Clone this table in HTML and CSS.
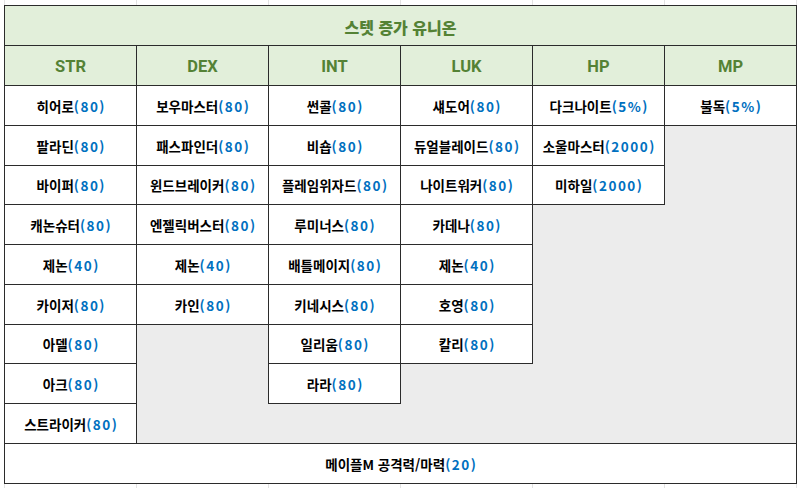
FILE: index.html
```html
<!DOCTYPE html>
<html lang="ko">
<head>
<meta charset="utf-8">
<title>스텟 증가 유니온</title>
<link rel="stylesheet" href="styles.css">
</head>
<body>
<div class="sheet">
  <div class="title">스텟 증가 유니온</div>
  <div class="head">STR</div>
  <div class="head">DEX</div>
  <div class="head">INT</div>
  <div class="head">LUK</div>
  <div class="head">HP</div>
  <div class="head">MP</div>

  <div class="col col-str">
    <div class="cell">히어로<span class="num">(80)</span></div>
    <div class="cell">팔라딘<span class="num">(80)</span></div>
    <div class="cell">바이퍼<span class="num">(80)</span></div>
    <div class="cell">캐논슈터<span class="num">(80)</span></div>
    <div class="cell">제논<span class="num">(40)</span></div>
    <div class="cell">카이저<span class="num">(80)</span></div>
    <div class="cell">아델<span class="num">(80)</span></div>
    <div class="cell">아크<span class="num">(80)</span></div>
    <div class="cell">스트라이커<span class="num">(80)</span></div>
  </div>
  <div class="col col-dex">
    <div class="cell">보우마스터<span class="num">(80)</span></div>
    <div class="cell">패스파인더<span class="num">(80)</span></div>
    <div class="cell">윈드브레이커<span class="num">(80)</span></div>
    <div class="cell">엔젤릭버스터<span class="num">(80)</span></div>
    <div class="cell">제논<span class="num">(40)</span></div>
    <div class="cell">카인<span class="num">(80)</span></div>
  </div>
  <div class="col col-int">
    <div class="cell">썬콜<span class="num">(80)</span></div>
    <div class="cell">비숍<span class="num">(80)</span></div>
    <div class="cell">플레임위자드<span class="num">(80)</span></div>
    <div class="cell">루미너스<span class="num">(80)</span></div>
    <div class="cell">배틀메이지<span class="num">(80)</span></div>
    <div class="cell">키네시스<span class="num">(80)</span></div>
    <div class="cell">일리움<span class="num">(80)</span></div>
    <div class="cell">라라<span class="num">(80)</span></div>
  </div>
  <div class="col col-luk">
    <div class="cell">섀도어<span class="num">(80)</span></div>
    <div class="cell">듀얼블레이드<span class="num">(80)</span></div>
    <div class="cell">나이트워커<span class="num">(80)</span></div>
    <div class="cell">카데나<span class="num">(80)</span></div>
    <div class="cell">제논<span class="num">(40)</span></div>
    <div class="cell">호영<span class="num">(80)</span></div>
    <div class="cell">칼리<span class="num">(80)</span></div>
  </div>
  <div class="col col-hp">
    <div class="cell">다크나이트<span class="num">(5%)</span></div>
    <div class="cell">소울마스터<span class="num">(2000)</span></div>
    <div class="cell">미하일<span class="num">(2000)</span></div>
  </div>
  <div class="col col-mp">
    <div class="cell">불독<span class="num">(5%)</span></div>
  </div>

  <div class="footer">메이플M 공격력/마력<span class="num">(20)</span></div>
</div>
</body>
</html>
```
FILE: styles.css
```css
html, body {
  margin: 0;
  padding: 0;
}

body {
  width: 800px;
  height: 488px;
  padding: 5px 0 0 4px;
  box-sizing: border-box;
  background-color: #ffffff;
  background-image: repeating-linear-gradient(
    to right,
    #e3e3e3 0, #e3e3e3 1px,
    transparent 1px, transparent 132px
  );
  background-position: 4px 0;
  font-family: "Noto Sans CJK KR", "Noto Sans", sans-serif;
  overflow: hidden;
}

.sheet {
  display: grid;
  grid-template-columns: repeat(6, 131px);
  grid-template-rows: 39px 39px 39px 39px 38px 39px 39px 39px 38px 39px 39px 39px;
  grid-auto-flow: row dense;
  gap: 1px;
  width: max-content;
  border: 1px solid #2b2b2b;
  background: #ececec;
}

.title,
.head,
.cell,
.footer {
  display: flex;
  align-items: center;
  justify-content: center;
  box-shadow: 0 0 0 1px #2b2b2b;
  white-space: nowrap;
}

.title {
  grid-column: 1 / -1;
  background: #e2efda;
  color: #548235;
  font-size: 16px;
  font-weight: 900;
  padding-top: 3px;
  box-sizing: border-box;
}

.head {
  background: #e2efda;
  color: #548235;
  font-family: Roboto, "Noto Sans", sans-serif;
  font-size: 16.5px;
  font-weight: 700;
  padding-top: 2px;
  box-sizing: border-box;
}

.col {
  display: contents;
}

.col-str > .cell { grid-column: 1; }
.col-dex > .cell { grid-column: 2; }
.col-int > .cell { grid-column: 3; }
.col-luk > .cell { grid-column: 4; }
.col-hp > .cell { grid-column: 5; }
.col-mp > .cell { grid-column: 6; }

.cell,
.footer {
  background: #ffffff;
  color: #000000;
  font-size: 13.5px;
  font-weight: 700;
}

.footer {
  grid-column: 1 / -1;
}

.num {
  color: #0070c0;
  letter-spacing: 1.5px;
  margin-right: -1.5px;
}
```
